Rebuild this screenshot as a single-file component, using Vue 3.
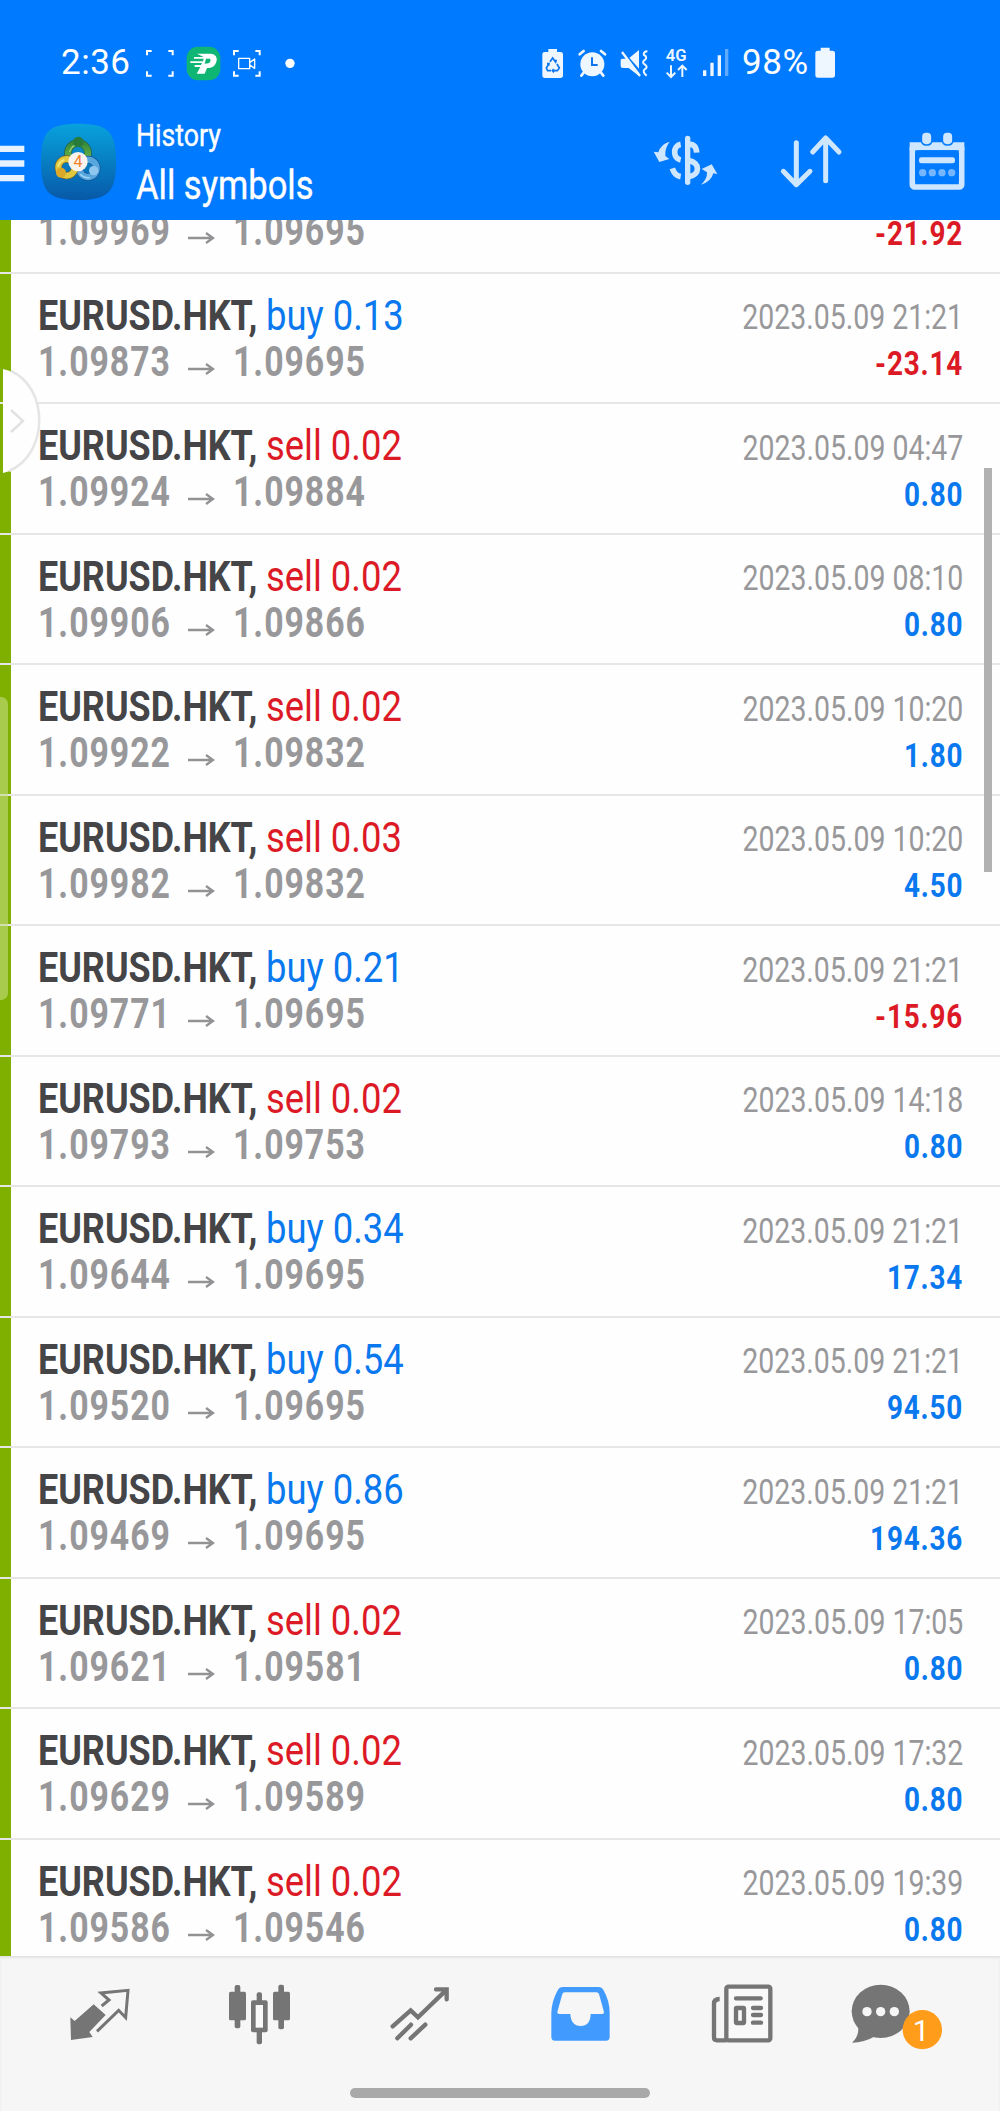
<script setup>
const rows = [
  ['buy', '0.13', '1.09969', '1.09695', '2023.05.09 21:21', '-21.92'],
  ['buy', '0.13', '1.09873', '1.09695', '2023.05.09 21:21', '-23.14'],
  ['sell', '0.02', '1.09924', '1.09884', '2023.05.09 04:47', '0.80'],
  ['sell', '0.02', '1.09906', '1.09866', '2023.05.09 08:10', '0.80'],
  ['sell', '0.02', '1.09922', '1.09832', '2023.05.09 10:20', '1.80'],
  ['sell', '0.03', '1.09982', '1.09832', '2023.05.09 10:20', '4.50'],
  ['buy', '0.21', '1.09771', '1.09695', '2023.05.09 21:21', '-15.96'],
  ['sell', '0.02', '1.09793', '1.09753', '2023.05.09 14:18', '0.80'],
  ['buy', '0.34', '1.09644', '1.09695', '2023.05.09 21:21', '17.34'],
  ['buy', '0.54', '1.09520', '1.09695', '2023.05.09 21:21', '94.50'],
  ['buy', '0.86', '1.09469', '1.09695', '2023.05.09 21:21', '194.36'],
  ['sell', '0.02', '1.09621', '1.09581', '2023.05.09 17:05', '0.80'],
  ['sell', '0.02', '1.09629', '1.09589', '2023.05.09 17:32', '0.80'],
  ['sell', '0.02', '1.09586', '1.09546', '2023.05.09 19:39', '0.80'],
].map(([side, volume, open, close, time, profit]) => ({ side, volume, open, close, time, profit }))
</script>

<template>
  <div class="screen">
    <header class="top">
      <div class="status">
        <span class="clock">2:36</span>
        <svg width="40" height="50" viewBox="420 30 120 150" fill="none" stroke="#fff" stroke-width="6">
          <path d="M441 76V63H455M505 63H518V76M518 124V137H505M455 137H441V124" />
        </svg>
        <svg width="46" height="50" viewBox="540 30 138 150">
          <rect x="560" y="50" width="101" height="101" rx="34" fill="#0fb573" />
          <path d="M591 71H632Q655 73 649 96Q643 115 621 114L614 131H590L601 111H584V105H603L606 99H571V94H609L611 86H582V81H611Z" fill="#fff" />
          <path d="M618 86H628Q634 87 630 96Q628 101 614 101Z" fill="#0fb573" />
        </svg>
        <svg width="40" height="50" viewBox="678 30 120 150" fill="none" stroke="#fff" stroke-width="6">
          <path d="M702 76V63H716M766 63H779V76M779 124V137H766M716 137H702V124" />
          <path d="M716 85H749V116H716ZM750 97L764 87V115L750 105" stroke-width="4" stroke-linejoin="round" />
        </svg>
        <svg width="50" height="50" viewBox="798 30 150 150"><circle cx="870" cy="100" r="14" fill="#fff" /></svg>
        <i class="grow"></i>
        <svg width="35" height="50" viewBox="51 30 105 150">
          <path d="M85 57H111V66H122Q129 66 129 73V136Q129 144 121 144H75Q67 144 67 136V73Q67 66 74 66H85Z" fill="#eef6ff" />
          <path d="M90 95L98 84L106 95M111 102L118 114L112 122H101M93 122H83L79 114L86 102M101 117L97 122L102 127M86 107L87 101L81 101M103 90L107 96L109 89" fill="none" stroke="#0d76ee" stroke-width="5" />
        </svg>
        <svg width="42" height="50" viewBox="156 30 126 150">
          <g stroke="#eef6ff" stroke-width="8" stroke-linecap="round" fill="none">
            <path d="M179 73L191 63M243 63L255 73M191 128L184 137M243 128L250 137" />
          </g>
          <circle cx="217" cy="103" r="36" fill="#eef6ff" />
          <path d="M216 82V105H233" fill="none" stroke="#0d76ee" stroke-width="6" />
        </svg>
        <svg width="44" height="50" viewBox="282 30 132 150">
          <path d="M302 90Q303 86 309 86H325L357 60V138L326 114H309Q302 114 302 108Z" fill="#eef6ff" />
          <path d="M304 62L360 126" stroke="#007aff" stroke-width="8" />
          <path d="M306 66L360 138" stroke="#eef6ff" stroke-width="7" />
          <path d="M382 63Q368 67 372 75Q385 82 373 91Q365 98 374 103Q386 111 374 118Q366 125 380 137" fill="none" stroke="#eef6ff" stroke-width="6" />
        </svg>
        <svg width="40" height="50" viewBox="414 30 120 150">
          <text class="net" x="437" y="94">4G</text>
          <path d="M453 106V141M440 128L453 141L466 128M487 141V107M474 120L487 107L500 120" fill="none" stroke="#eef6ff" stroke-width="6" />
        </svg>
        <svg width="38" height="50" viewBox="534 30 114 150" fill="#eef6ff">
          <path d="M549 121h10v17h-10zM571 98h10v40h-10zM593 76h10v62h-10z" />
          <path d="M615 57h10v81h-10z" opacity=".4" />
        </svg>
        <span class="percent">98%</span>
        <svg width="30" height="50" viewBox="875 30 90 150"><path d="M901 53H928V62H937Q944 62 944 70V135Q944 143 936 143H893Q885 143 885 135V70Q885 62 892 62H901Z" fill="#eef6ff" /></svg>
      </div>
      <div class="bar">
        <svg width="38" height="100" viewBox="0 240 114 300" fill="#e6f2ff">
          <path d="M0 347H73V366H0ZM0 391H73V410H0ZM0 435H73V454H0Z" />
        </svg>
        <svg width="82" height="100" viewBox="114 240 246 300">
          <defs>
            <linearGradient id="tile" x2="0" y2="1"><stop stop-color="#08a2dc" /><stop offset="1" stop-color="#0759a8" /></linearGradient>
            <linearGradient id="leaf" x2="0" y2="1"><stop stop-color="#378b38" /><stop offset="1" stop-color="#74bd4d" /></linearGradient>
          </defs>
          <path d="M235 281C325 281 348 305 348 395S325 510 235 510S123 485 123 395S145 281 235 281Z" fill="url(#tile)" />
          <g fill="none">
            <circle cx="234" cy="369" r="30" stroke="#235d4a" stroke-width="23" />
            <circle cx="234" cy="369" r="30" stroke="url(#leaf)" stroke-width="19" />
            <circle cx="264" cy="415" r="26" stroke="#145194" stroke-width="23" />
            <circle cx="264" cy="415" r="26" stroke="#57a6dd" stroke-width="19" />
            <circle cx="200" cy="412" r="25" stroke="#755f28" stroke-width="22" />
            <circle cx="200" cy="412" r="25" stroke="#dfc83f" stroke-width="18" />
            <path d="M208 366Q216 345 234 344" stroke="#9bd17a" stroke-width="4" />
            <path d="M174 410Q178 394 193 389" stroke="#f6ea86" stroke-width="5" />
            <path d="M240 433Q254 446 270 443" stroke="#a6d8f6" stroke-width="4" />
          </g>
          <circle cx="235" cy="336" r="16" fill="#287c3b" />
          <circle cx="183" cy="428" r="15" fill="#dba927" />
          <circle cx="281" cy="422" r="14" fill="#8fc6ed" />
          <circle cx="234" cy="395" r="29" fill="#f8f4ed" />
          <text class="four" x="234" y="412" text-anchor="middle">4</text>
        </svg>
        <div class="titles">
          <div class="sub">History</div>
          <div class="main">All symbols</div>
        </div>
        <i class="grow"></i>
        <svg width="72" height="100" viewBox="60 0 216 300" fill="none" stroke="#cfe6ff" stroke-width="17">
          <path d="M152 103C128 107 128 145 152 150M127 175Q134 197 152 200" />
          <path d="M173 104C190 100 199 109 200 128M176 152C211 157 211 195 176 200" />
          <path d="M173 85V217" stroke-linecap="round" stroke-width="16" />
          <path d="M119 95Q93 101 85 127L71 125L88 156L118 147L106 138Q104 115 119 95ZM213 224Q243 216 250 190L262 192L245 163L215 177L231 187Q232 207 213 224Z" fill="#cfe6ff" stroke="none" />
        </svg>
        <svg class="sort" width="68" height="100" viewBox="441 0 204 300" fill="none" stroke="#cfe6ff" stroke-width="15" stroke-linecap="round" stroke-linejoin="round">
          <path d="M499 98V223M460 184L499 224L540 184M587 212V85M548 126L587 84L627 126" />
        </svg>
        <svg class="cal" width="66" height="100" viewBox="825 0 198 300">
          <rect x="847" y="108" width="148" height="123" rx="7" fill="none" stroke="#cfe6ff" stroke-width="17" />
          <path d="M839 97H1003V121H839Z" fill="#cfe6ff" />
          <rect x="855" y="121" width="132" height="101" rx="14" fill="#007aff" />
          <g fill="#cfe6ff" stroke="#007aff" stroke-width="5"><rect x="874" y="66" width="32" height="39" rx="14" /><rect x="937" y="66" width="32" height="39" rx="14" /></g>
          <rect x="867" y="142" width="108" height="18" rx="7" fill="#cfe6ff" />
          <g fill="#75b6ff"><circle cx="878" cy="188" r="11" /><circle cx="907" cy="188" r="11" /><circle cx="936" cy="188" r="11" /><circle cx="965" cy="188" r="11" /></g>
        </svg>
      </div>
    </header>

    <main class="list">
      <div class="rows">
        <div v-for="(r, i) in rows" :key="i" class="row">
          <i class="mark"></i>
          <div class="left">
            <div class="line"><span class="symbol">EURUSD.HKT,</span><span class="side" :class="r.side">{{ r.side }} {{ r.volume }}</span></div>
            <div class="line">
              <span class="price">{{ r.open }}</span>
              <svg class="arrow" width="28" height="46" viewBox="0 0 28 46"><path d="M0 30H25M18 25L25 30L18 35" fill="none" stroke="#929295" stroke-width="2.3" /></svg>
              <span class="price">{{ r.close }}</span>
            </div>
          </div>
          <div class="right">
            <div class="time">{{ r.time }}</div>
            <div class="profit" :class="r.profit.startsWith('-') ? 'sell' : 'buy'">{{ r.profit }}</div>
          </div>
        </div>
      </div>
      <i class="edge"></i>
      <i class="scroll"></i>
      <svg class="handle" width="44" height="112" viewBox="0 0 44 112">
        <path d="M3 4C51 14 51 98 3 108Z" fill="#fefefe" />
        <path d="M11 6C49 23 49 89 9 106" fill="none" stroke="#e5e5e5" stroke-width="2.5" />
        <path d="M11 45L23 56L11 67" fill="none" stroke="#e2e2e2" stroke-width="2.5" />
      </svg>
    </main>

    <nav class="tabs">
      <div class="icons">
        <svg width="161" height="115" viewBox="54 48 483 345">
          <path d="M211 232L224 243L281 193L317 225L268 276L278 291L213 300Z" fill="#757575" />
          <path d="M305 198L327 180L303 159L384 151L377 233L356 211L291 274" fill="none" stroke="#757575" stroke-width="9" />
        </svg>
        <svg width="161" height="115" viewBox="537 48 483 345" fill="#757575">
          <rect x="704" y="135" width="17" height="130" rx="6" /><rect x="687" y="155" width="51" height="86" rx="5" />
          <rect x="835" y="134" width="17" height="134" rx="6" /><rect x="819" y="155" width="51" height="86" rx="5" />
          <rect x="770" y="157" width="16" height="156" rx="6" /><rect x="753" y="181" width="50" height="96" rx="6" />
          <rect x="767" y="195" width="22" height="68" fill="#f9f9f9" />
        </svg>
        <svg width="161" height="115" viewBox="30 48 483 345" fill="none" stroke="#757575" stroke-width="13" stroke-linecap="round">
          <path d="M188 259L242 211L264 232L347 152M318 148H350V178M202 295L243 254M242 295L286 254" />
        </svg>
        <svg width="161" height="115" viewBox="513 48 483 345">
          <path d="M697 141H807Q816 141 820 149Q839 182 839 218V290Q839 302 828 302H675Q664 302 664 290V218Q665 182 684 149Q688 141 697 141Z" fill="#419bff" />
          <path d="M704 157H799Q805 157 807 162L822 216Q823 222 816 222H782Q781 258 752 258T721 222H688Q681 222 682 216L697 162Q699 157 704 157Z" fill="#f6f6f6" />
        </svg>
        <svg width="161" height="115" viewBox="6 48 483 345" fill="none" stroke="#757575" stroke-width="13">
          <rect x="199" y="140" width="132" height="161" rx="6" fill="#f9f9f9" />
          <path d="M179 177Q162 177 162 191V292Q162 301 171 301H199" />
          <path d="M228 175H302M279 204H303M279 225H303M279 248H303" stroke-linecap="round" />
          <rect x="228" y="204" width="24" height="45" rx="2" />
        </svg>
        <svg width="161" height="115" viewBox="489 48 483 345">
          <ellipse cx="662" cy="214" rx="87" ry="80" fill="#757575" />
          <path d="M594 258Q599 287 576 308Q614 307 642 290Z" fill="#757575" />
          <g fill="#f6f6f6"><circle cx="621" cy="215" r="14" /><circle cx="662" cy="215" r="14" /><circle cx="703" cy="215" r="14" /></g>
          <circle cx="787" cy="269" r="59" fill="#ff9c1a" />
          <text class="badge" x="783" y="303" text-anchor="middle">1</text>
        </svg>
      </div>
      <i class="home"></i>
    </nav>
  </div>
</template>

<style scoped>
.screen {
  width: 1000px;
  height: 2111px;
  display: flex;
  flex-direction: column;
  background: #fefefe;
  font-family: Roboto, "Liberation Sans", sans-serif;
  overflow: hidden;
}
svg { display: block; flex: none; }
.grow { flex: 1; }
.top { height: 220px; flex: none; background: #007aff; color: #fff; box-sizing: border-box; padding-top: 40px; }
.status { display: flex; height: 50px; padding: 0 158px 0 61px; }
.clock, .percent { flex: none; font-size: 35px; line-height: 46px; white-space: nowrap; }
.clock { width: 79px; letter-spacing: .5px; }
.percent { width: 76px; padding-left: 6px; box-sizing: border-box; letter-spacing: .6px; }
.net { font-size: 50px; font-weight: 600; fill: #eef6ff; }
.bar { display: flex; height: 100px; margin-top: 20px; padding-right: 29px; }
.titles { padding-left: 16px; white-space: nowrap; }
.sub { font-size: 31px; line-height: 40px; padding-top: 6px; transform: scaleX(.86); transform-origin: left; }
.main { font-size: 41px; line-height: 50px; padding-top: 4px; transform: scaleX(.842); transform-origin: left; }
.sub, .main { width: 205px; -webkit-text-stroke: .4px #fff; }
.sort { margin-left: 55px; }
.cal { margin-left: 60px; }
.four { font-size: 48px; fill: #ef8230; }

.list { position: relative; height: 1736px; flex: none; overflow: hidden; }
.rows { margin-top: -77px; }
.row {
  height: 130.54px;
  box-sizing: border-box;
  display: flex;
  border-bottom: 2px solid #e6e6e6;
}
.mark { width: 11px; flex: none; background: #7fb000; }
.left { padding: 19px 0 0 26.5px; }
.line { display: flex; height: 46px; line-height: 46px; font-size: 42px; white-space: nowrap; }
.symbol, .side, .price { display: block; flex: none; transform-origin: left; }
.symbol { width: 228px; font-weight: 700; color: #454548; transform: scaleX(.855); }
.side { transform: scaleX(.867); }
.price { width: 130px; font-weight: 700; color: #98989b; letter-spacing: 1.2px; transform: scaleX(.805); }
.arrow { margin: 0 17px 0 20px; }
.right { flex: 1; text-align: right; padding: 21.5px 36.5px 0 0; white-space: nowrap; }
.time { font-size: 35px; line-height: 46px; color: #98989b; transform: scaleX(.813); transform-origin: right; }
.profit { font-size: 34px; line-height: 45px; font-weight: 700; letter-spacing: 1px; transform: scaleX(.82); transform-origin: right; }
.buy { color: #0a78ee; }
.sell { color: #dc1a26; }
.edge { position: absolute; left: 0; top: 477px; width: 8px; height: 303px; border-radius: 0 7px 7px 0; background: rgba(195, 222, 130, .6); }
.scroll { position: absolute; left: 984px; top: 248px; width: 8px; height: 404px; background: #b1b1b1; }
.handle { position: absolute; left: 0; top: 145px; }

.tabs { flex: 1; background: #f6f6f6; box-shadow: inset 0 2px 2px #e3e3e3; }
.icons { display: flex; padding-left: 18px; }
.badge { font-size: 88px; fill: #fff; }
.home { display: block; width: 300px; height: 10px; margin: 17px auto 0; border-radius: 5px; background: #a9a9a9; }
</style>
